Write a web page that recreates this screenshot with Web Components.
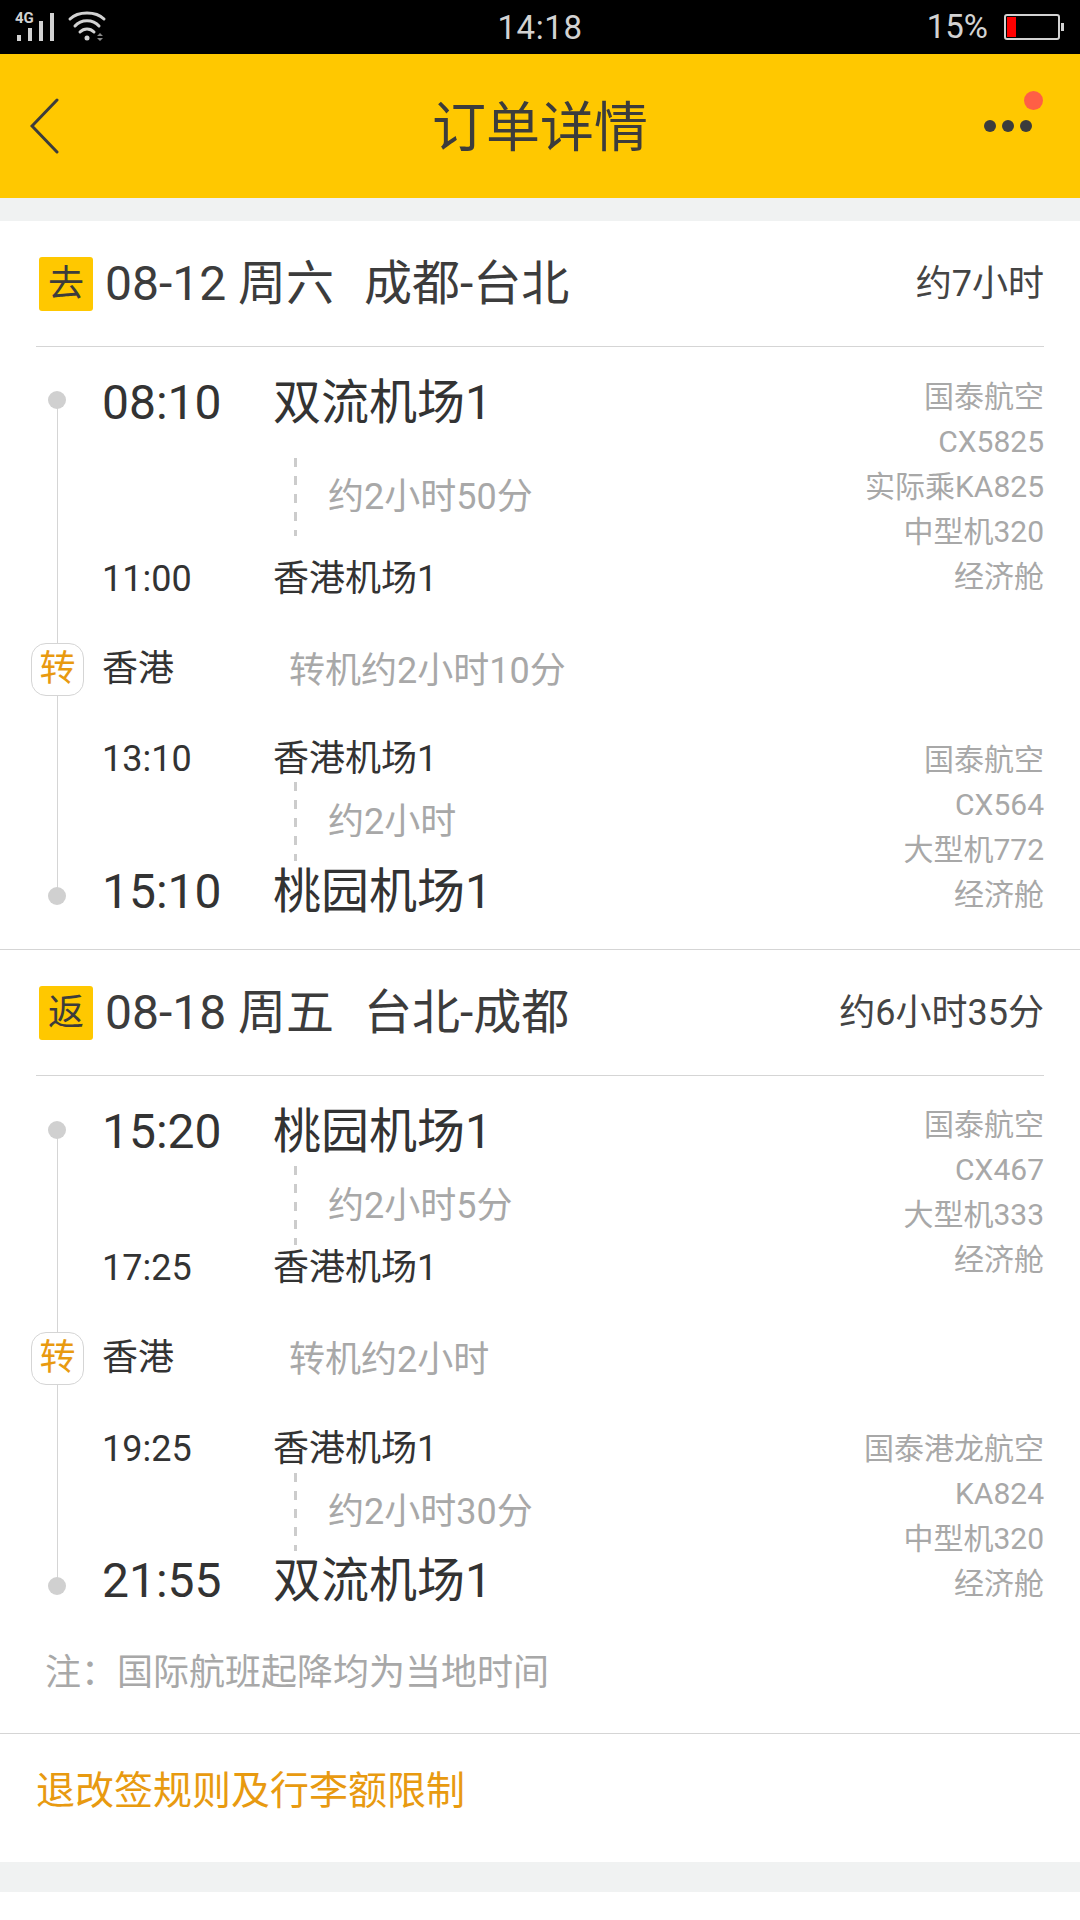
<!DOCTYPE html>
<html lang="zh">
<head>
<meta charset="utf-8">
<title>订单详情</title>
<style>
	html, body {
		margin: 0;
		background: #fff;
		font-family: Roboto, "Noto Sans CJK SC", sans-serif;
	}
</style>
</head>
<body>
<order-page>
	<status-bar></status-bar>
	<nav-bar>订单详情</nav-bar>
	<order-card>
		<flight-head tag="去" date="08-12 周六" route="成都-台北" total="约7小时"></flight-head>
		<flight-trip style="padding-bottom:27px">
			<flight-stop size="big" dot="-3" time="08:10" airport="双流机场1" style="margin-top:26px"></flight-stop>
			<flight-leg dash="78" top="25" bottom="19" text="约2小时50分"></flight-leg>
			<flight-stop time="11:00" airport="香港机场1"></flight-stop>
			<flight-transfer city="香港" text="转机约2小时10分" top="42" bottom="42"></flight-transfer>
			<flight-stop time="13:10" airport="香港机场1"></flight-stop>
			<flight-leg dash="79" top="-1" bottom="1" text="约2小时"></flight-leg>
			<flight-stop size="big" dot="4" time="15:10" airport="桃园机场1"></flight-stop>
			<flight-info slot="info" at="27" lines="国泰航空|CX5825|实际乘KA825|中型机320|经济舱"></flight-info>
			<flight-info slot="info" at="138" lines="国泰航空|CX564|大型机772|经济舱"></flight-info>
		</flight-trip>
		<flight-head tag="返" date="08-18 周五" route="台北-成都" total="约6小时35分" rule></flight-head>
		<flight-trip>
			<flight-stop size="big" dot="-2" time="15:20" airport="桃园机场1" style="margin-top:26px"></flight-stop>
			<flight-leg dash="79" top="4" bottom="-1" text="约2小时5分"></flight-leg>
			<flight-stop time="17:25" airport="香港机场1"></flight-stop>
			<flight-transfer city="香港" text="转机约2小时" top="42" bottom="43"></flight-transfer>
			<flight-stop time="19:25" airport="香港机场1"></flight-stop>
			<flight-leg dash="78" top="0" bottom="0" text="约2小时30分"></flight-leg>
			<flight-stop size="big" dot="5" time="21:55" airport="双流机场1"></flight-stop>
			<flight-info slot="info" at="26" lines="国泰航空|CX467|大型机333|经济舱"></flight-info>
			<flight-info slot="info" at="144" lines="国泰港龙航空|KA824|中型机320|经济舱"></flight-info>
		</flight-trip>
		<order-note>注：国际航班起降均为当地时间</order-note>
		<order-link>退改签规则及行李额限制</order-link>
	</order-card>
</order-page>

<script>
function define(name, css, html) {
	customElements.define(name, class extends HTMLElement {
		constructor() {
			super();
			this.attachShadow({ mode: 'open' });
		}
		connectedCallback() {
			const get = (k) => this.getAttribute(k) || '';
			this.shadowRoot.innerHTML = `<style>${css}</style>${typeof html === 'function' ? html(get, this) : html}`;
		}
	});
}

define('order-page', `
	:host { display: block; width: 1080px; min-height: 1920px; background: #fff; }
`, `<slot></slot>`);

define('status-bar', `
	:host { display: grid; grid-template-columns: 1fr auto 1fr; align-items: center; height: 54px; background: #000; color: #d2d2d2; font-size: 33px; line-height: 54px; }
	svg { display: block; }
	.clock { letter-spacing: 0.6px; position: relative; top: 1px; }
	.right { display: flex; justify-content: flex-end; align-items: center; gap: 16px; padding-right: 16px; }
`, `
	<svg width="110" height="54" viewBox="0 0 110 54">
		<text x="15" y="23" font-size="15" font-weight="700" fill="#d2d2d2" font-family="Roboto">4G</text>
		<rect x="17" y="35" width="4" height="6" fill="#d2d2d2"/>
		<rect x="28" y="28" width="4" height="13" fill="#d2d2d2"/>
		<rect x="39" y="21" width="4" height="20" fill="#d2d2d2"/>
		<rect x="50" y="13" width="4" height="28" fill="#d2d2d2"/>
		<g fill="none" stroke="#d2d2d2" stroke-width="3" stroke-linecap="round">
			<path d="M70 19 C78 11 96 11 104 19"/>
			<path d="M75 26 C81 19 93 19 99 26"/>
			<path d="M80 32 C84 28 90 28 94 32"/>
		</g>
		<circle cx="87" cy="38" r="2.5" fill="#d2d2d2"/>
		<path d="M97 36 L100 33 L103 36 Z M97 38 L100 41 L103 38 Z" fill="#888"/>
	</svg>
	<div class="clock">14:18</div>
	<div class="right">
		<span>15%</span>
		<svg width="60" height="28" viewBox="0 0 60 28">
			<rect x="1" y="2" width="54" height="24" rx="2" fill="none" stroke="#d2d2d2" stroke-width="2"/>
			<rect x="3" y="4" width="9" height="20" fill="#f00"/>
			<rect x="57" y="10" width="3" height="8" fill="#d2d2d2"/>
		</svg>
	</div>
`);

define('nav-bar', `
	:host { display: grid; grid-template-columns: 1fr auto 1fr; align-items: center; height: 144px; background: #ffc800; color: #3c3c3c; padding: 0 48px 0 30px; box-sizing: border-box; font-size: 54px; line-height: 60px; }
	.title { position: relative; left: 9px; top: 3px; }
	.more { position: relative; display: flex; gap: 6px; justify-self: end; }
	.more i { width: 12px; height: 12px; border-radius: 50%; background: #3c3c3c; }
	.more b { position: absolute; right: -11px; top: -29px; width: 19px; height: 19px; border-radius: 50%; background: #ff5f45; }
	svg { display: block; }
`, `
	<svg width="30" height="56" viewBox="0 0 30 56" fill="none" stroke="#3c3c3c" stroke-width="3" stroke-linecap="round"><path d="M27 2 L2 28 L27 54"/></svg>
	<span class="title"><slot></slot></span>
	<div class="more"><i></i><i></i><i></i><b></b></div>
`);

define('order-card', `
	:host { display: block; background: #fff; border-top: 23px solid #f0f2f2; border-bottom: 30px solid #f0f2f2; }
`, `<slot></slot>`);

define('flight-head', `
	:host { display: block; }
	.full { height: 1px; background: #d5d5d5; }
	.row { display: flex; align-items: center; height: 125px; padding: 0 36px 0 39px; color: #3c3c3c; font-size: 48px; line-height: 60px; }
	.tag { width: 54px; height: 54px; background: #ffc800; border-radius: 3px; display: flex; align-items: center; justify-content: center; font-size: 36px; margin-right: 12px; }
	.route { margin-left: 30px; flex: 1; }
	.total { font-size: 36px; color: #444; }
	.rule { height: 1px; background: #d5d5d5; margin: 0 36px; }
`, (get, el) => `
	${el.hasAttribute('rule') ? '<div class="full"></div>' : ''}
	<div class="row">
		<span class="tag">${get('tag')}</span>
		<span>${get('date')}</span>
		<span class="route">${get('route')}</span>
		<span class="total">${get('total')}</span>
	</div>
	<div class="rule"></div>
`);

define('flight-trip', `
	:host { display: grid; grid-template-columns: 1fr auto; padding: 0 36px 0 0; }
	.main { position: relative; }
	.rail { position: absolute; left: 57px; top: 53px; bottom: 25px; width: 1px; background: #d5d5d5; }
	.info { display: flex; flex-direction: column; align-items: flex-end; }
`, `
	<div class="main"><div class="rail"></div><slot></slot></div>
	<div class="info"><slot name="info"></slot></div>
`);

define('flight-stop', `
	:host { display: flex; align-items: center; position: relative; color: #333; font-size: 36px; height: 48px; line-height: 48px; }
	:host([size="big"]) { font-size: 48px; height: 60px; line-height: 60px; }
	.dot { position: absolute; left: 48px; width: 18px; height: 18px; border-radius: 50%; background: #d0d0d0; }
	.time { margin-left: 102px; width: 171px; }
`, (get, el) => `
	${el.hasAttribute('dot') ? `<span class="dot" style="transform:translateY(${get('dot')}px)"></span>` : ''}
	<span class="time">${get('time')}</span>
	<span>${get('airport')}</span>
`);

define('flight-leg', `
	:host { display: block; margin-left: 294px; }
	.wrap { display: flex; align-items: center; gap: 31px; color: #a8a8a8; font-size: 36px; line-height: 48px; }
	.dash { width: 3px; background: repeating-linear-gradient(#cccccc 0 9px, transparent 9px 18px); }
`, (get) => `
	<div class="wrap" style="margin-top:${get('top')}px;margin-bottom:${get('bottom')}px">
		<span class="dash" style="height:${get('dash')}px"></span>
		<span>${get('text')}</span>
	</div>
`);

define('flight-transfer', `
	:host { display: block; position: relative; color: #333; font-size: 36px; line-height: 48px; }
	.wrap { display: flex; align-items: center; height: 48px; }
	.box { position: absolute; left: 31px; width: 53px; height: 53px; box-sizing: border-box; background: #fff; border: 1px solid #d5d5d5; border-radius: 15px; color: #e89a10; display: flex; align-items: center; justify-content: center; font-size: 36px; }
	.city { margin-left: 102px; width: 188px; }
	.text { color: #a8a8a8; padding-top: 4px; margin-left: -1px; }
`, (get) => `
	<div class="wrap" style="margin-top:${get('top')}px;margin-bottom:${get('bottom')}px">
		<span class="box">转</span>
		<span class="city">${get('city')}</span>
		<span class="text">${get('text')}</span>
	</div>
`);

define('flight-info', `
	:host { display: block; text-align: right; color: #a8a8a8; font-size: 30px; line-height: 45px; white-space: nowrap; }
`, (get, el) => {
	el.style.marginTop = get('at') + 'px';
	return get('lines').split('|').map((l) => `<div>${l}</div>`).join('');
});

define('order-note', `
	:host { display: block; padding: 37px 45px 35px; color: #a8a8a8; font-size: 36px; line-height: 50px; }
`, `<slot></slot>`);

define('order-link', `
	:host { display: block; border-top: 1px solid #d5d5d5; padding: 32px 36px 46px; color: #e89a10; font-size: 39px; line-height: 50px; }
`, `<slot></slot>`);
</script>
</body>
</html>
